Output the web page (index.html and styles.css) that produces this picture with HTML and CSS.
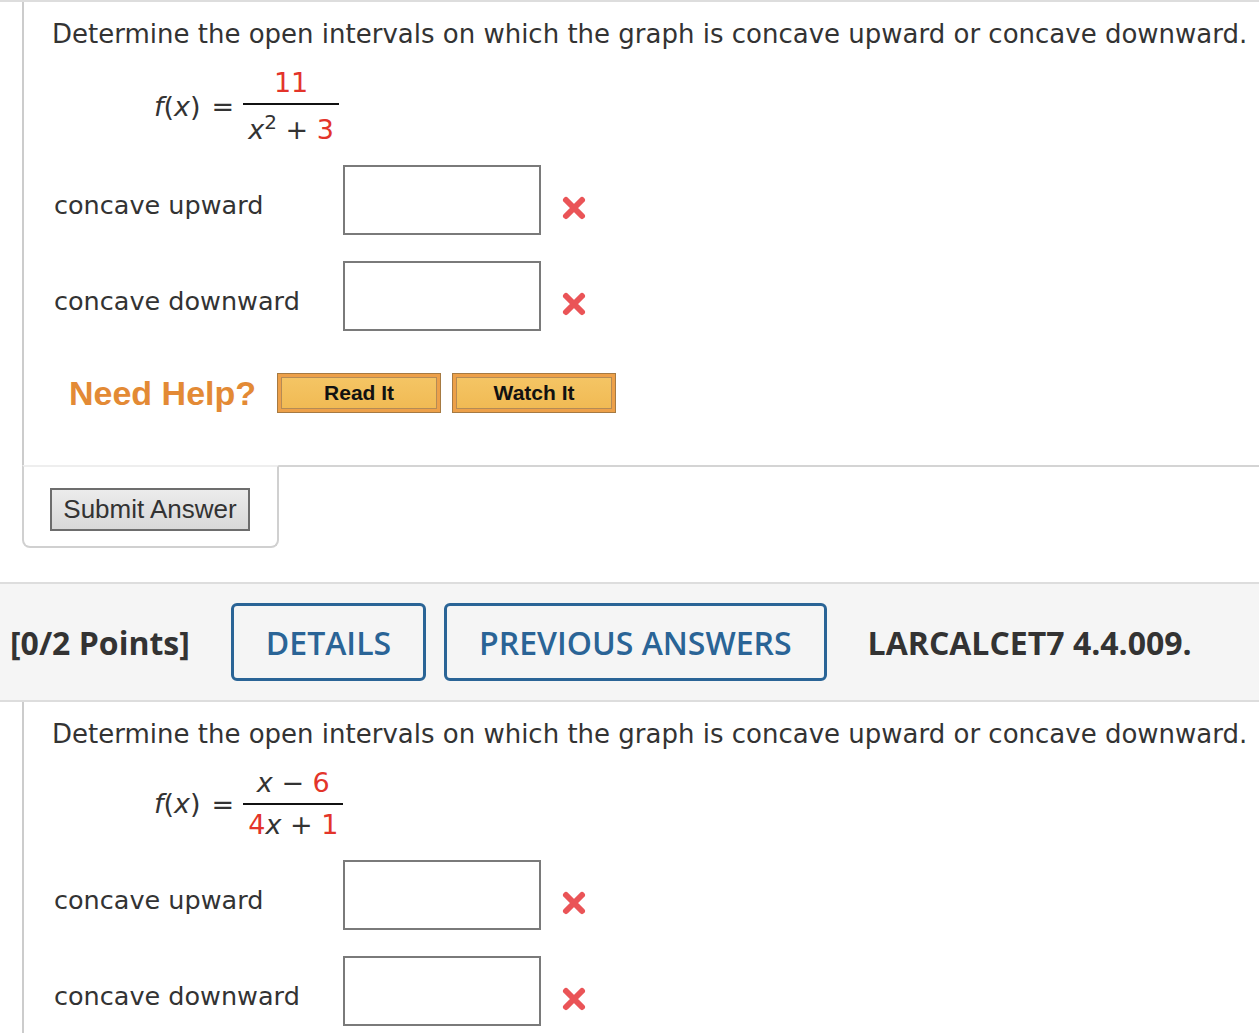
FILE: index.html
```html
<!DOCTYPE html>
<html lang="en">
<head>
  <meta charset="UTF-8">
  <title>Concavity Questions</title>
  <link rel="stylesheet" href="styles.css">
</head>
<body>
  <div class="topline"></div>

  <div class="question">
    <div class="qbody">
      <p class="prompt">Determine the open intervals on which the graph is concave upward or concave downward.</p>

      <div class="math">
        <span class="fn"><i>f</i>(<i>x</i>)</span>
        <span class="eq">=</span>
        <span class="frac">
          <span class="num"><span class="red">11</span></span>
          <span class="bar"></span>
          <span class="den has-sup"><i>x</i><sup>2</sup> + <span class="red">3</span></span>
        </span>
      </div>

      <div class="answer-row">
        <label class="answer-label">concave upward</label>
        <input type="text" class="answer-box">
        <svg class="mark" viewBox="0 0 26 26"><path d="M5 5 L21 21 M21 5 L5 21"/></svg>
      </div>
      <div class="answer-row">
        <label class="answer-label">concave downward</label>
        <input type="text" class="answer-box">
        <svg class="mark" viewBox="0 0 26 26"><path d="M5 5 L21 21 M21 5 L5 21"/></svg>
      </div>

      <div class="help-row">
        <span class="need-help">Need Help?</span>
        <button class="help-btn">Read It</button>
        <button class="help-btn">Watch It</button>
      </div>
    </div>

    <div class="submit-tab">
      <button class="submit-btn">Submit Answer</button>
    </div>
  </div>

  <div class="qheader">
    <span class="points">[0/2 Points]</span>
    <button class="outline-btn">DETAILS</button>
    <button class="outline-btn">PREVIOUS ANSWERS</button>
    <span class="qcode">LARCALCET7 4.4.009.</span>
  </div>

  <div class="question">
    <div class="qbody">
      <p class="prompt">Determine the open intervals on which the graph is concave upward or concave downward.</p>

      <div class="math">
        <span class="fn"><i>f</i>(<i>x</i>)</span>
        <span class="eq">=</span>
        <span class="frac">
          <span class="num"><i>x</i> &minus; <span class="red">6</span></span>
          <span class="bar"></span>
          <span class="den"><span class="red">4</span><i>x</i> + <span class="red">1</span></span>
        </span>
      </div>

      <div class="answer-row">
        <label class="answer-label">concave upward</label>
        <input type="text" class="answer-box">
        <svg class="mark" viewBox="0 0 26 26"><path d="M5 5 L21 21 M21 5 L5 21"/></svg>
      </div>
      <div class="answer-row">
        <label class="answer-label">concave downward</label>
        <input type="text" class="answer-box">
        <svg class="mark" viewBox="0 0 26 26"><path d="M5 5 L21 21 M21 5 L5 21"/></svg>
      </div>
    </div>
  </div>
</body>
</html>
```

FILE: styles.css
```css
html, body {
  overflow: hidden;
}

body {
  margin: 0;
  background: #fff;
  color: #333;
  font-family: "DejaVu Sans", Verdana, sans-serif;
}

.topline {
  border-top: 2px solid #ddd;
}

.question {
  margin-left: 22px;
}

.qbody {
  border-left: 2px solid #ccc;
  border-bottom: 2px solid #d4d4d4;
  padding: 16px 0 52px 28px;
}

.question:last-child .qbody {
  border-bottom: none;
  padding-bottom: 40px;
}

.prompt {
  margin: 0;
  font-size: 26px;
  line-height: 32px;
  white-space: nowrap;
}

.math {
  display: flex;
  align-items: center;
  margin: 18px 0 0 102px;
  font-size: 27px;
  color: #333;
}

.fn {
  line-height: 30px;
}

.eq {
  margin: 0 9px 0 11px;
}

.frac {
  display: flex;
  flex-direction: column;
  align-items: center;
}

.num, .den {
  line-height: 30px;
  padding: 0 5px;
}

.den.has-sup {
  padding-top: 5px;
}

.bar {
  align-self: stretch;
  height: 2px;
  background: #111;
  margin: 5px 0;
}

.den sup {
  font-size: 20px;
  line-height: 0;
  vertical-align: 10px;
}

.red {
  color: #e3342a;
}

.answer-row {
  display: flex;
  align-items: center;
  margin-top: 20px;
}

.answer-row + .answer-row {
  margin-top: 26px;
}

.answer-label {
  width: 289px;
  margin-left: 2px;
  font-size: 25.5px;
  padding-top: 10px;
}

.answer-box {
  box-sizing: border-box;
  width: 198px;
  height: 70px;
  margin: 0;
  border: 2px solid #7a7a7a;
  background: #fff;
}

.mark {
  width: 26px;
  height: 26px;
  margin: 16px 0 0 20px;
}

.mark path {
  stroke: #ea5457;
  stroke-width: 6;
  stroke-linecap: round;
}

.help-row {
  display: flex;
  align-items: center;
  margin: 42px 0 0 17px;
}

.need-help {
  font: bold 34px "Liberation Sans", Arial, sans-serif;
  color: #e38a35;
  margin-right: 21px;
}

.help-btn {
  width: 164px;
  height: 40px;
  margin-right: 11px;
  padding: 0;
  border: 1px solid #a67a42;
  background: linear-gradient(#f5c666, #f0b952);
  box-shadow: inset 0 0 0 3px #eda049, inset 0 0 0 4px #b58b55;
  font: bold 21px "Liberation Sans", Arial, sans-serif;
  color: #111;
}

.submit-tab {
  width: 227px;
  margin-top: -2px;
  padding: 21px 0 15px 26px;
  border: 2px solid #d0d0d0;
  border-top-color: #eee;
  border-radius: 0 0 8px 8px;
}

.submit-btn {
  width: 200px;
  height: 43px;
  padding: 0;
  border: 2px solid #6d6d6d;
  background: linear-gradient(#ececec, #d8d8d8);
  font: 26px "Liberation Sans", Arial, sans-serif;
  color: #333;
}

.qheader {
  display: flex;
  align-items: center;
  margin-top: 34px;
  padding: 19px 0 19px 10px;
  background: #f5f5f5;
  border-top: 2px solid #ddd;
  border-bottom: 2px solid #ddd;
  font-family: "Open Sans", sans-serif;
}

.points {
  font-size: 32px;
  font-weight: 700;
  color: #333;
  margin-right: 41px;
}

.outline-btn {
  height: 78px;
  padding: 0 32px;
  margin-right: 18px;
  border: 3px solid #2a6496;
  border-radius: 6px;
  background: transparent;
  font: 600 32px "Open Sans", sans-serif;
  color: #2a6496;
}

.qcode {
  margin-left: 23px;
  font-size: 32px;
  font-weight: 700;
  color: #333;
}
```
